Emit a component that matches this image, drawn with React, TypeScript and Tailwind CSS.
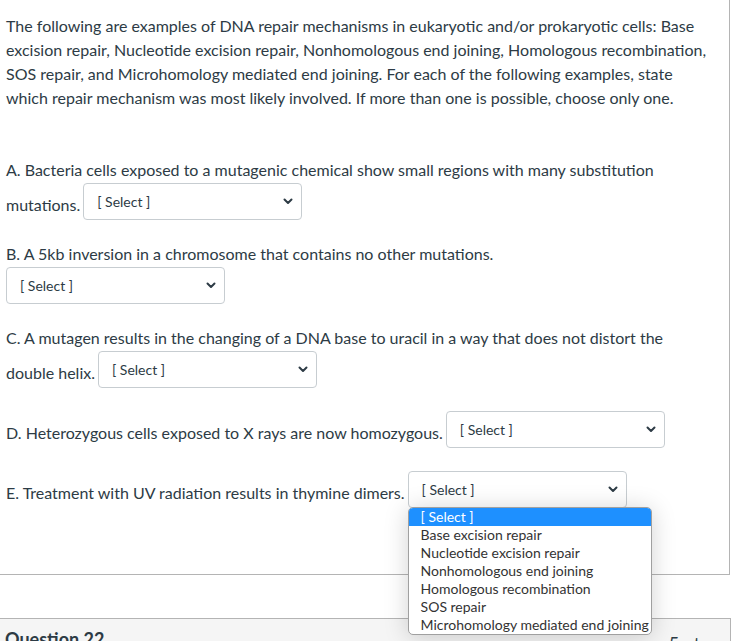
import { useState } from "react";

const options = [
  "[ Select ]",
  "Base excision repair",
  "Nucleotide excision repair",
  "Nonhomologous end joining",
  "Homologous recombination",
  "SOS repair",
  "Microhomology mediated end joining",
];

function Chevron() {
  return (
    <svg width="10" height="7" viewBox="0 0 10 7" className="shrink-0">
      <polyline points="1.5,1.5 5,5 8.5,1.5" fill="none" stroke="#2d3b45" strokeWidth="2" strokeLinecap="round" strokeLinejoin="round" />
    </svg>
  );
}

function Select({ open = false }: { open?: boolean }) {
  const [hover, setHover] = useState(0);
  return (
    <div className="relative shrink-0">
      <div className="flex h-[37px] w-[219px] items-center justify-between rounded-[4px] border border-[#c7cdd1] bg-white pl-[13px] pr-[8px]">
        <span className="text-[14px] leading-none text-[#2d3b45]">[ Select ]</span>
        <Chevron />
      </div>
      {open && (
        <div className="absolute left-0 top-[36px] z-10 w-[244px] overflow-hidden rounded-[5px] border border-[#a0a0a0] bg-white shadow-[0_2px_24px_rgba(0,0,0,0.18)]">
          {options.map((o, i) => (
            <div
              key={o}
              onMouseEnter={() => setHover(i)}
              className={
                i === hover
                  ? "h-[18px] whitespace-nowrap bg-[#1e90ff] pl-[12px] text-[14px] leading-[18px] text-white"
                  : "h-[18px] whitespace-nowrap pl-[12px] text-[14px] leading-[18px] text-[#333333]"
              }
            >
              {o}
            </div>
          ))}
        </div>
      )}
    </div>
  );
}

export default function App() {
  return (
    <div className="h-screen overflow-hidden bg-white font-['Lato','Noto_Sans',sans-serif] text-[16px] text-[#2d3b45]">
      <div className="h-[575px] w-[730px] border-b border-r border-[#b4b4b4] px-[6px] pt-[14px]">
        <p className="leading-[24px]">
          The following are examples of DNA repair mechanisms in eukaryotic and/or prokaryotic cells: Base
          <br />
          excision repair, Nucleotide excision repair, Nonhomologous end joining, Homologous recombination,
          <br />
          SOS repair, and Microhomology mediated end joining. For each of the following examples, state
          <br />
          which repair mechanism was most likely involved. If more than one is possible, choose only one.
        </p>

        <div className="mt-[48px]">
          <p className="whitespace-nowrap leading-[24px]">
            A. Bacteria cells exposed to a mutagenic chemical show small regions with many substitution
          </p>
          <div className="mt-[1px] flex items-end gap-[3px]">
            <span className="mb-[3px] leading-[24px]">mutations.</span>
            <Select />
          </div>
        </div>

        <div className="mt-[22px]">
          <p className="leading-[24px]">B. A 5kb inversion in a chromosome that contains no other mutations.</p>
          <div className="mt-[1px] flex">
            <Select />
          </div>
        </div>

        <div className="mt-[22px]">
          <p className="whitespace-nowrap leading-[24px]">
            C. A mutagen results in the changing of a DNA base to uracil in a way that does not distort the
          </p>
          <div className="mt-[1px] flex items-end gap-[3px]">
            <span className="mb-[3px] leading-[24px]">double helix.</span>
            <Select />
          </div>
        </div>

        <div className="mt-[23px] flex items-end gap-[3px]">
          <span className="mb-[3px] leading-[24px]">D. Heterozygous cells exposed to X rays are now homozygous.</span>
          <Select />
        </div>

        <div className="mt-[23px] flex items-end gap-[3px]">
          <span className="mb-[3px] leading-[24px]">E. Treatment with UV radiation results in thymine dimers.</span>
          <Select open />
        </div>
      </div>

      <div className="mt-[43px] w-[731px] border-r border-t border-[#b4b4b4] bg-[#f5f5f5]">
        <div className="flex items-start justify-between pl-[5px] pr-[22px] pt-[8px]">
          <span className="text-[18px] font-bold leading-[24px]">Question 22</span>
          <span className="pt-[4px] text-[18px] leading-[24px]">5 pts</span>
        </div>
        <div className="h-[30px]" />
      </div>
    </div>
  );
}
